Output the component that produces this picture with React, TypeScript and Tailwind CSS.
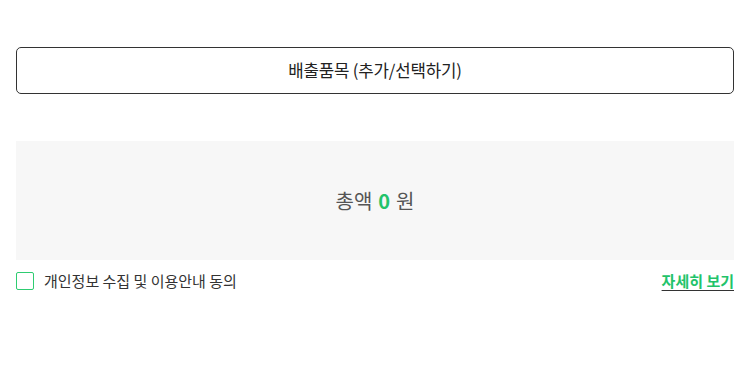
import React from "react";

const font = { fontFamily: '"Noto Sans CJK KR", "Noto Sans", sans-serif' };

export default function App() {
  return (
    <div className="w-[750px] h-[373px] bg-white px-4 pt-[47px]" style={font}>
      {/* Item select button */}
      <button className="flex h-[47px] w-full items-center justify-center rounded-[5px] border border-[#333] bg-white text-[16.8px] tracking-[-0.2px] text-[#222]">
        배출품목 (추가/선택하기)
      </button>

      {/* Total */}
      <div className="mt-[47px] flex h-[119px] items-center justify-center bg-[#f7f7f7] text-[20px] text-[#555]">
        <span>총액</span>
        <span className="mx-[6px] font-bold text-[#22c36a]">0</span>
        <span>원</span>
      </div>

      {/* Agreement */}
      <div className="mt-[11px] flex h-[20px] items-center justify-between">
        <label className="flex items-center gap-[10px]">
          <span className="h-[18px] w-[18px] rounded-[2px] border border-[#2ecc71] bg-white" />
          <span className="text-[15px] text-[#333]">개인정보 수집 및 이용안내 동의</span>
        </label>
        <a className="text-[15px] font-bold text-[#22c36a] underline decoration-[#333] underline-offset-[3px]">
          자세히 보기
        </a>
      </div>
    </div>
  );
}
